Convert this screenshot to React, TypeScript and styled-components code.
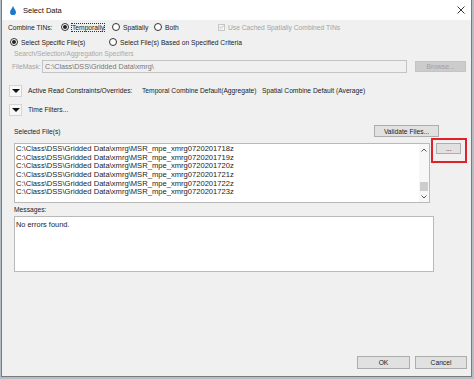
import styled, { createGlobalStyle } from "styled-components";

const GlobalStyle = createGlobalStyle`
    html, body {
        margin: 0;
        padding: 0;
        background: #b4bec6;
    }
    body {
        font-family: "Liberation Sans", Arial, sans-serif;
        font-size: 6.7px;
        color: #1c1c1c;
    }
`;

const Window = styled.div`
    width: 469px;
    height: 376px;
    margin-left: 1px;
    border: 1px solid #7a7a7a;
    border-top: none;
    display: flex;
    flex-direction: column;
    background: #f0f0f0;
`;

const TitleBar = styled.div`
    height: 20px;
    background: #ffffff;
    display: flex;
    align-items: center;
    padding: 0 6px 0 8px;
`;

const Title = styled.span`
    margin-left: 7px;
    font-size: 7.5px;
    color: #111;
    flex: 1;
`;

const Body = styled.div`
    flex: 1;
    display: flex;
    flex-direction: column;
    padding: 0 4px 7px 6px;
`;

const Row = styled.div<{ $h?: number; $mt?: number; $ml?: number }>`
    display: flex;
    align-items: center;
    height: ${(p) => p.$h ?? 14}px;
    margin-top: ${(p) => p.$mt ?? 0}px;
    margin-left: ${(p) => p.$ml ?? 0}px;
    white-space: nowrap;
`;

const Cell = styled.div<{ $w?: number }>`
    display: flex;
    align-items: center;
    width: ${(p) => (p.$w ? `${p.$w}px` : "auto")};
    flex-shrink: 0;
`;

const LabelCell = styled.div<{ $w: number }>`
    width: ${(p) => p.$w}px;
    height: 10px;
    align-self: flex-end;
    padding-left: 6px;
    flex-shrink: 0;
`;

const Text = styled.span<{ $disabled?: boolean; $focus?: boolean }>`
    color: ${(p) => (p.$disabled ? "#a3a3a3" : "#1c1c1c")};
    outline: ${(p) => (p.$focus ? "1px dotted #333" : "none")};
    outline-offset: 0;
`;

const RadioCircle = styled.span<{ $on?: boolean }>`
    width: 8px;
    height: 8px;
    box-sizing: border-box;
    border-radius: 50%;
    border: 1px solid #333;
    background: #fff;
    margin-right: 3px;
    display: flex;
    align-items: center;
    justify-content: center;

    &::after {
        content: "";
        width: 4px;
        height: 4px;
        border-radius: 50%;
        background: ${(p) => (p.$on ? "#222" : "transparent")};
    }
`;

const CheckBox = styled.span`
    width: 7px;
    height: 7px;
    box-sizing: border-box;
    border: 1px solid #c6c6c6;
    background: #f4f4f4;
    margin-right: 3px;
    display: flex;
    align-items: center;
    justify-content: center;
`;

const GroupLabel = styled.div`
    height: 10px;
    line-height: 10px;
    margin-left: 6px;
    color: #a8a8a8;
`;

const DisabledInput = styled.div`
    width: 365px;
    height: 13px;
    box-sizing: border-box;
    border: 1px solid #c4c4c4;
    background: #f0f0f0;
    color: #777;
    display: flex;
    align-items: center;
    padding-left: 2px;
    font-size: 7.2px;
`;

const Button = styled.div<{ $w: number; $h?: number; $disabled?: boolean }>`
    width: ${(p) => p.$w}px;
    height: ${(p) => p.$h ?? 13}px;
    box-sizing: border-box;
    border: 1px solid ${(p) => (p.$disabled ? "#c4c4c4" : "#adadad")};
    background: ${(p) => (p.$disabled ? "#cccccc" : "#e1e1e1")};
    color: ${(p) => (p.$disabled ? "#a0a0a0" : "#1c1c1c")};
    display: flex;
    align-items: center;
    justify-content: center;
    flex-shrink: 0;
`;

const ExpandButton = styled.div`
    width: 13px;
    height: 12px;
    box-sizing: border-box;
    border: 1px solid #d4d4d4;
    background: #f7f7f7;
    display: flex;
    align-items: center;
    justify-content: center;
    margin-left: 1px;
    margin-right: 6px;

    &::after {
        content: "";
        border-left: 4px solid transparent;
        border-right: 4px solid transparent;
        border-top: 4px solid #111;
    }
`;

const FilesRow = styled.div`
    display: flex;
    align-items: flex-start;
    height: 65px;
`;

const ListBox = styled.div`
    width: 420px;
    height: 60px;
    margin: 5px 0 0 6px;
    box-sizing: border-box;
    border: 1px solid #b9b9b9;
    background: #fff;
    display: flex;
    overflow: hidden;
`;

const ListLines = styled.div`
    flex: 1;
    padding: 1px 0 0 1px;
    font-size: 7.6px;
`;

const ListLine = styled.div`
    height: 8.7px;
    line-height: 8.7px;
    white-space: nowrap;
`;

const ScrollBar = styled.div`
    width: 10px;
    background: #f7f7f7;
    display: flex;
    flex-direction: column;
    align-items: center;
`;

const ScrollArrow = styled.div`
    height: 11px;
    display: flex;
    align-items: center;
    justify-content: center;
`;

const ScrollTrack = styled.div`
    flex: 1;
    width: 100%;
    display: flex;
    flex-direction: column;
    justify-content: flex-end;
`;

const ScrollThumb = styled.div`
    height: 9px;
    margin: 0 1px;
    background: #cdcdcd;
`;

const Highlight = styled.div`
    width: 36px;
    height: 25px;
    box-sizing: border-box;
    margin-left: 1px;
    border: 2px solid #e0202a;
    padding: 3px 0 0 3px;
`;

const MessagesBox = styled.div`
    width: 420px;
    height: 56px;
    margin: 1px 0 0 6px;
    box-sizing: border-box;
    border: 1px solid #b9b9b9;
    background: #fff;
    padding: 3px 0 0 1px;
    font-size: 7.4px;
`;

const Footer = styled.div`
    margin-top: auto;
    display: flex;
    justify-content: flex-end;
    gap: 5px;
`;

const files = [
    "C:\\Class\\DSS\\Gridded Data\\xmrg\\MSR_mpe_xmrg0720201718z",
    "C:\\Class\\DSS\\Gridded Data\\xmrg\\MSR_mpe_xmrg0720201719z",
    "C:\\Class\\DSS\\Gridded Data\\xmrg\\MSR_mpe_xmrg0720201720z",
    "C:\\Class\\DSS\\Gridded Data\\xmrg\\MSR_mpe_xmrg0720201721z",
    "C:\\Class\\DSS\\Gridded Data\\xmrg\\MSR_mpe_xmrg0720201722z",
    "C:\\Class\\DSS\\Gridded Data\\xmrg\\MSR_mpe_xmrg0720201723z",
];

const Radio = ({ label, on, focus }: { label: string; on?: boolean; focus?: boolean }) => (
    <>
        <RadioCircle $on={on} />
        <Text $focus={focus}>{label}</Text>
    </>
);

const Chevron = ({ up }: { up?: boolean }) => (
    <svg width="6" height="4" viewBox="0 0 6 4">
        <polyline
            points={up ? "0.5,3.5 3,1 5.5,3.5" : "0.5,0.5 3,3 5.5,0.5"}
            fill="none"
            stroke="#555"
            strokeWidth="1"
        />
    </svg>
);

export default function App() {
    return (
        <>
            <GlobalStyle />
            <Window>
                <TitleBar>
                    <svg width="6" height="9" viewBox="0 0 6 9">
                        <path d="M3 0 C3.6 2 6 4.5 6 6.2 A3 3 0 0 1 0 6.2 C0 4.5 2.4 2 3 0 Z" fill="#1a78d0" />
                    </svg>
                    <Title>Select Data</Title>
                    <svg width="8" height="8" viewBox="0 0 8 8">
                        <path d="M0.5 0.5 L7.5 7.5 M7.5 0.5 L0.5 7.5" stroke="#222" strokeWidth="0.9" />
                    </svg>
                </TitleBar>
                <Body>
                    <Row>
                        <Cell $w={53}>
                            <Text>Combine TINs:</Text>
                        </Cell>
                        <Cell $w={51}>
                            <Radio label="Temporally" on focus />
                        </Cell>
                        <Cell $w={42}>
                            <Radio label="Spatially" />
                        </Cell>
                        <Cell $w={64}>
                            <Radio label="Both" />
                        </Cell>
                        <Cell>
                            <CheckBox>
                                <svg width="5" height="4" viewBox="0 0 5 4">
                                    <polyline points="0.5,2 2,3.4 4.6,0.5" fill="none" stroke="#b8b8b8" strokeWidth="0.9" />
                                </svg>
                            </CheckBox>
                            <Text $disabled>Use Cached Spatially Combined TINs</Text>
                        </Cell>
                    </Row>
                    <Row $mt={1} $ml={2}>
                        <Cell $w={99}>
                            <Radio label="Select Specific File(s)" on />
                        </Cell>
                        <Cell>
                            <Radio label="Select File(s) Based on Specified Criteria" />
                        </Cell>
                    </Row>
                    <GroupLabel>Search/Selection/Aggregation Specifiers</GroupLabel>
                    <Row $ml={4}>
                        <Cell $w={30}>
                            <Text $disabled>FileMask:</Text>
                        </Cell>
                        <DisabledInput>C:\Class\DSS\Gridded Data\xmrg\</DisabledInput>
                        <Cell $w={8} />
                        <Button $w={51} $h={11} $disabled>
                            Browse...
                        </Button>
                    </Row>
                    <Row $h={13} $mt={11}>
                        <ExpandButton />
                        <Cell $w={114}>
                            <Text>Active Read Constraints/Overrides:</Text>
                        </Cell>
                        <Cell $w={120}>
                            <Text>Temporal Combine Default(Aggregate)</Text>
                        </Cell>
                        <Text>Spatial Combine Default (Average)</Text>
                    </Row>
                    <Row $h={13} $mt={6}>
                        <ExpandButton />
                        <Text>Time Filters...</Text>
                    </Row>
                    <Row $mt={8}>
                        <LabelCell $w={360}>
                            <Text>Selected File(s)</Text>
                        </LabelCell>
                        <Button $w={65} $h={12}>
                            Validate Files...
                        </Button>
                    </Row>
                    <FilesRow>
                        <ListBox>
                            <ListLines>
                                {files.map((f) => (
                                    <ListLine key={f}>{f}</ListLine>
                                ))}
                            </ListLines>
                            <ScrollBar>
                                <ScrollArrow>
                                    <Chevron up />
                                </ScrollArrow>
                                <ScrollTrack>
                                    <ScrollThumb />
                                </ScrollTrack>
                                <ScrollArrow>
                                    <Chevron />
                                </ScrollArrow>
                            </ScrollBar>
                        </ListBox>
                        <Highlight>
                            <Button $w={25} $h={11}>
                                ...
                            </Button>
                        </Highlight>
                    </FilesRow>
                    <Row $h={12} $ml={6}>
                        <Text>Messages:</Text>
                    </Row>
                    <MessagesBox>No errors found.</MessagesBox>
                    <Footer>
                        <Button $w={53}>OK</Button>
                        <Button $w={52}>Cancel</Button>
                    </Footer>
                </Body>
            </Window>
        </>
    );
}
